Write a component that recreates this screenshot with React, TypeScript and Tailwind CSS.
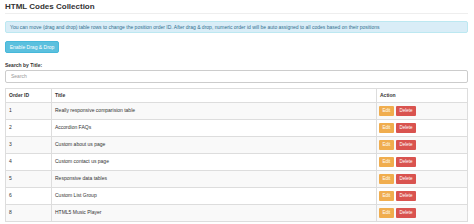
import React from "react";

const rows = [
  ["1", "Really responsive comparision table"],
  ["2", "Accordion FAQs"],
  ["3", "Custom about us page"],
  ["4", "Custom contact us page"],
  ["5", "Responsive data tables"],
  ["6", "Custom List Group"],
  ["8", "HTML5 Music Player"],
];

export default function App() {
  return (
    <div className="w-[474px] h-[224px] overflow-hidden bg-white text-[#333] pl-[5px] pr-[6px]" style={{ fontFamily: '"Liberation Sans", Arial, sans-serif' }}>
      <div className="h-[13px] pt-[2px] text-[8px] leading-[9px] font-bold">HTML Codes Collection</div>
      <div className="border-t border-[#eee] mt-0" />
      <div className="mt-[7px] h-[12px] bg-[#d9edf7] border border-[#bce8f1] rounded-[2px] text-[#31708f] text-[5px] leading-[10px] pl-[4px] whitespace-nowrap">
        You can move (drag and drop) table rows to change the position order ID. After drag &amp; drop, numeric order id will be auto assigned to all codes based on their positions
      </div>
      <div className="mt-[8px] w-[54px] h-[12px] bg-[#5bc0de] border border-[#46b8da] rounded-[2px] text-white text-[5px] leading-[10px] text-center">
        Enable Drag &amp; Drop
      </div>
      <div className="mt-[9px] text-[5px] leading-[6px] font-bold">Search by Title:</div>
      <div className="mt-[2px] h-[13px] border border-[#ccc] rounded-[2px] text-[5px] leading-[11px] pl-[5px] text-[#999]">Search</div>
      <table className="mt-[5px] w-full border-collapse text-[5px] border border-[#ddd]">
        <thead>
          <tr className="h-[14px]">
            <th className="w-[46px] border border-[#ddd] text-left font-bold pl-[3px] py-0">Order ID</th>
            <th className="border border-[#ddd] text-left font-bold pl-[3px]">Title</th>
            <th className="w-[91px] border border-[#ddd] text-left font-bold pl-[3px]">Action</th>
          </tr>
        </thead>
        <tbody>
          {rows.map((r, i) => (
            <tr key={i} className={i % 2 === 0 ? "h-[17px] bg-[#f9f9f9]" : "h-[17px] bg-white"}>
              <td className="border border-[#ddd] pl-[3px]">{r[0]}</td>
              <td className="border border-[#ddd] pl-[3px]">{r[1]}</td>
              <td className="border border-[#ddd] pl-[2px]">
                <div className="flex gap-[2px]">
                  <div className="w-[15px] h-[10px] bg-[#f0ad4e] rounded-[1px] text-white text-[4.5px] leading-[10px] text-center">Edit</div>
                  <div className="w-[20px] h-[10px] bg-[#d9534f] rounded-[1px] text-white text-[4.5px] leading-[10px] text-center">Delete</div>
                </div>
              </td>
            </tr>
          ))}
        </tbody>
      </table>
    </div>
  );
}
